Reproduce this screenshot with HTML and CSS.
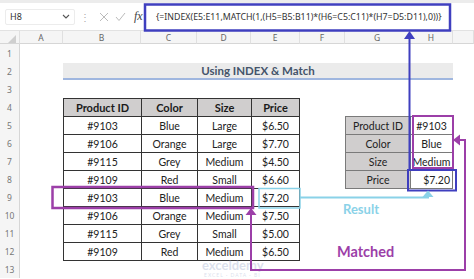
FILE: index.html
```html
<!DOCTYPE html>
<html>
<head>
    <title>Using INDEX &amp; Match</title>
    <link rel="stylesheet" href="styles.css">
</head>
<body>
<div class="app">
    <div class="fbar">
        <div class="namebox">
            <span>H8</span>
            <svg class="chev" width="8" height="5" viewBox="0 0 8 5"><path d="M1 1 L4 4 L7 1" fill="none" stroke="#555" stroke-width="1.1"/></svg>
        </div>
        <span class="dots">⋮</span>
        <svg class="fbtn" width="10" height="10" viewBox="0 0 10 10"><path d="M1 1 L9 9 M9 1 L1 9" stroke="#bbb" stroke-width="1"/></svg>
        <svg class="fbtn" width="11" height="10" viewBox="0 0 11 10"><path d="M1 5 L4 8.5 L10 1" fill="none" stroke="#bbb" stroke-width="1"/></svg>
        <span class="fx">fx</span>
        <div class="formula">{=INDEX(E5:E11,MATCH(1,(H5=B5:B11)*(H6=C5:C11)*(H7=D5:D11),0))}</div>
    </div>

    <div class="sheet">
        <div class="colh corner"><span class="tri"></span></div>
        <div class="colh">A</div>
        <div class="colh">B</div>
        <div class="colh">C</div>
        <div class="colh">D</div>
        <div class="colh">E</div>
        <div class="colh">F</div>
        <div class="colh">G</div>
        <div class="colh">H</div>
        <div class="colh"></div>

        <div class="rowh">1</div>
        <div class="rowh">2</div>
        <div class="rowh">3</div>
        <div class="rowh">4</div>
        <div class="rowh">5</div>
        <div class="rowh">6</div>
        <div class="rowh">7</div>
        <div class="rowh">8</div>
        <div class="rowh">9</div>
        <div class="rowh">10</div>
        <div class="rowh">11</div>
        <div class="rowh">12</div>
        <div class="rowh">13</div>

        <div class="title">Using INDEX &amp; Match</div>

        <table class="main">
            <tr><th class="c-id">Product ID</th><th class="c-color">Color</th><th class="c-size">Size</th><th>Price</th></tr>
            <tr><td>#9103</td><td>Blue</td><td>Large</td><td>$6.50</td></tr>
            <tr><td>#9106</td><td>Orange</td><td>Large</td><td>$7.70</td></tr>
            <tr><td>#9115</td><td>Grey</td><td>Medium</td><td>$4.50</td></tr>
            <tr><td>#9109</td><td>Red</td><td>Small</td><td>$6.60</td></tr>
            <tr><td>#9103</td><td>Blue</td><td>Medium</td><td>$7.20</td></tr>
            <tr><td>#9106</td><td>Orange</td><td>Medium</td><td>$7.50</td></tr>
            <tr><td>#9115</td><td>Grey</td><td>Small</td><td>$5.00</td></tr>
            <tr><td>#9109</td><td>Red</td><td>Medium</td><td>$6.50</td></tr>
        </table>

        <table class="lookup">
            <tr><th>Product ID</th><td>#9103</td></tr>
            <tr><th>Color</th><td>Blue</td></tr>
            <tr><th>Size</th><td>Medium</td></tr>
            <tr><th>Price</th><td class="num">$7.20</td></tr>
        </table>
    </div>

    <div class="wm">
        <span class="wm-name">exceldemy</span>
        <span class="wm-sub">EXCEL · DATA · BI</span>
    </div>

    <svg class="marks" width="474" height="279" viewBox="0 0 474 279">
        <!-- formula highlight and arrow to H8 -->
        <rect x="145" y="4.5" width="305" height="26" fill="none" stroke="#3f3fbf" stroke-width="2.5"/>
        <line x1="409.5" y1="38" x2="409.5" y2="170" stroke="#3f3fbf" stroke-width="2"/>
        <path d="M409.5 31 L415 39 L404 39 Z" fill="#3f3fbf"/>
        <rect x="408" y="170" width="48" height="20.5" fill="none" stroke="#3f3fbf" stroke-width="2"/>

        <!-- matched criteria -->
        <rect x="413" y="116" width="40" height="52" fill="none" stroke="#9c3fa8" stroke-width="2"/>
        <rect x="52.5" y="187" width="200.5" height="21" fill="none" stroke="#9c3fa8" stroke-width="2.5"/>
        <path d="M251 214 L251 270 L465 270 L465 140 L459 140" fill="none" stroke="#9c3fa8" stroke-width="2"/>
        <path d="M251 208 L256.5 215 L245.5 215 Z" fill="#9c3fa8"/>
        <path d="M453 140 L460 134.5 L460 145.5 Z" fill="#9c3fa8"/>

        <!-- result -->
        <rect x="259" y="188.5" width="41" height="19.5" fill="none" stroke="#8ad2e8" stroke-width="1.5"/>
        <path d="M300 197.5 L428 197.5 L428 195" fill="none" stroke="#8ad2e8" stroke-width="2"/>
        <path d="M428 190.5 L433.5 197 L422.5 197 Z" fill="#8ad2e8"/>
    </svg>

    <span class="note result">Result</span>
    <span class="note matched">Matched</span>
</div>
</body>
</html>
```

FILE: styles.css
```css
* { box-sizing: border-box; }
body { margin: 0; background: #fff; font-family: "Lato", "Noto Sans", sans-serif; }
.app { position: relative; width: 474px; height: 279px; overflow: hidden; background: #fff; }

/* formula bar */
.fbar { height: 31px; display: flex; align-items: center; gap: 0; background: #fff; border-top: 3px solid #ececec; border-bottom: 1px solid #e2e2e2; padding-left: 5px; }
.namebox { width: 70px; height: 16px; display: flex; align-items: center; justify-content: space-between; padding: 0 4px 0 4px; font-family: "Noto Sans", sans-serif; font-size: 9px; color: #333; background: #fff; border: 1px solid #ececec; border-radius: 2px; }
.dots { width: 16px; text-align: center; color: #aaa; font-size: 10px; margin-left: 2px; }
.fbtn { margin-left: 6px; }
.fx { margin-left: 8px; width: 18px; font-family: "Liberation Serif", serif; font-style: italic; font-size: 12px; color: #444; }
.formula { margin-left: 1px; flex: 1; font-family: "Noto Sans", sans-serif; font-size: 8.8px; color: #333; padding-left: 3px; white-space: nowrap; }

/* grid */
.sheet { display: grid; grid-template-columns: 20px 43px 78px 56px 54px 49px 45px 65px 43px 1fr; grid-template-rows: 13px repeat(13, 18px); }
.colh { background: #f5f5f5; border-right: 1px solid #e0e0e0; border-bottom: 1px solid #d6d6d6; font-family: "Noto Sans", sans-serif; font-size: 8.5px; color: #666; display: flex; align-items: center; justify-content: center; }
.corner { position: relative; }
.tri { width: 0; height: 0; border-left: 8px solid transparent; border-bottom: 8px solid #cfcfcf; margin: 3px 0 0 4px; }
.rowh { grid-column: 1; background: #f5f5f5; border-right: 1px solid #d6d6d6; font-family: "Noto Sans", sans-serif; font-size: 8.5px; color: #777; display: flex; align-items: center; justify-content: center; }

.title { grid-column: 3 / 10; grid-row: 3; margin-top: 1px; background: #ebebeb; border-bottom: 2px solid #9fb6df; font-weight: bold; font-size: 11.5px; color: #44546a; display: flex; align-items: center; justify-content: center; }

.main, .lookup { border-collapse: collapse; font-size: 10.5px; color: #222; }
.main { grid-column: 3 / 7; grid-row: 5 / 14; width: 237px; height: 162px; table-layout: fixed; }
.main th, .main td { border: 1px solid #333; text-align: center; padding: 0; height: 18px; }
.main th { background: #d0cece; font-weight: bold; font-size: 11px; color: #1a1a1a; }
.main .c-id { width: 78px; }
.main .c-color { width: 56px; }
.main .c-size { width: 54px; }

.lookup { grid-column: 8 / 10; grid-row: 6 / 10; width: 108px; height: 72px; table-layout: fixed; }
.lookup th, .lookup td { border: 1px solid #7a7a7a; height: 18px; padding: 0; text-align: center; }
.lookup th { width: 65px; background: #d0cece; font-weight: normal; color: #222; }
.lookup td { background: #fff; }
.lookup .num { text-align: right; padding-right: 2px; }

/* annotations */
.marks { position: absolute; left: 0; top: 0; pointer-events: none; }
.note { position: absolute; font-weight: bold; line-height: 1; }
.result { left: 343px; top: 203px; font-size: 13px; color: #8ad2e8; }
.matched { left: 337px; top: 245px; font-size: 14.5px; color: #9c3fa8; }

.wm { position: absolute; left: 192px; top: 259px; display: flex; flex-direction: column; opacity: 0.3; color: #8a9bc4; }
.wm-name { font-size: 13px; font-weight: bold; line-height: 1; padding-left: 10px; }
.wm-sub { font-size: 5px; line-height: 6px; letter-spacing: 1px; padding-left: 12px; }
```
